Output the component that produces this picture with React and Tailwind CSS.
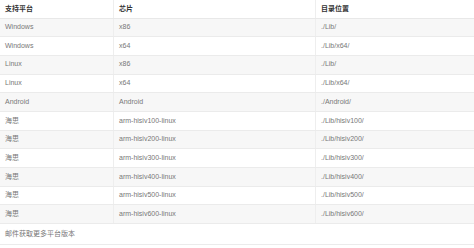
const rows = [
  ["Windows", "x86", "./Lib/"],
  ["Windows", "x64", "./Lib/x64/"],
  ["Linux", "x86", "./Lib/"],
  ["Linux", "x64", "./Lib/x64/"],
  ["Android", "Android", "./Android/"],
  ["海思", "arm-hisiv100-linux", "./Lib/hisiv100/"],
  ["海思", "arm-hisiv200-linux", "./Lib/hisiv200/"],
  ["海思", "arm-hisiv300-linux", "./Lib/hisiv300/"],
  ["海思", "arm-hisiv400-linux", "./Lib/hisiv400/"],
  ["海思", "arm-hisiv500-linux", "./Lib/hisiv500/"],
  ["海思", "arm-hisiv600-linux", "./Lib/hisiv600/"],
];

const font = { fontFamily: '"Liberation Sans", "Noto Sans CJK SC", sans-serif' };

export default function App() {
  return (
    <div className="w-[474px] h-[248px] bg-white overflow-hidden text-[7px]" style={font}>
      {/* header */}
      <div className="grid grid-cols-[113px_202px_1fr] h-[18.5px] border-b border-[#e8e8e8] font-bold text-[#333]">
        <div className="flex items-center px-[5px]">支持平台</div>
        <div className="flex items-center px-[5px] border-l border-[#eee]">芯片</div>
        <div className="flex items-center px-[5px] border-l border-[#eee]">目录位置</div>
      </div>

      {rows.map((r, i) => (
        <div
          key={i}
          className={`grid grid-cols-[113px_202px_1fr] h-[18.7px] border-b border-[#ebebeb] text-[#777] ${
            i % 2 === 0 ? "bg-[#f7f7f7]" : "bg-white"
          }`}
        >
          <div className="flex items-center px-[5px]">{r[0]}</div>
          <div className="flex items-center px-[5px] border-l border-[#eee]">{r[1]}</div>
          <div className="flex items-center px-[5px] border-l border-[#eee]">{r[2]}</div>
        </div>
      ))}

      {/* footer */}
      <div className="h-[21px] flex items-center px-[5px] border-b border-[#ebebeb] text-[#777]">
        邮件获取更多平台版本
      </div>
    </div>
  );
}
